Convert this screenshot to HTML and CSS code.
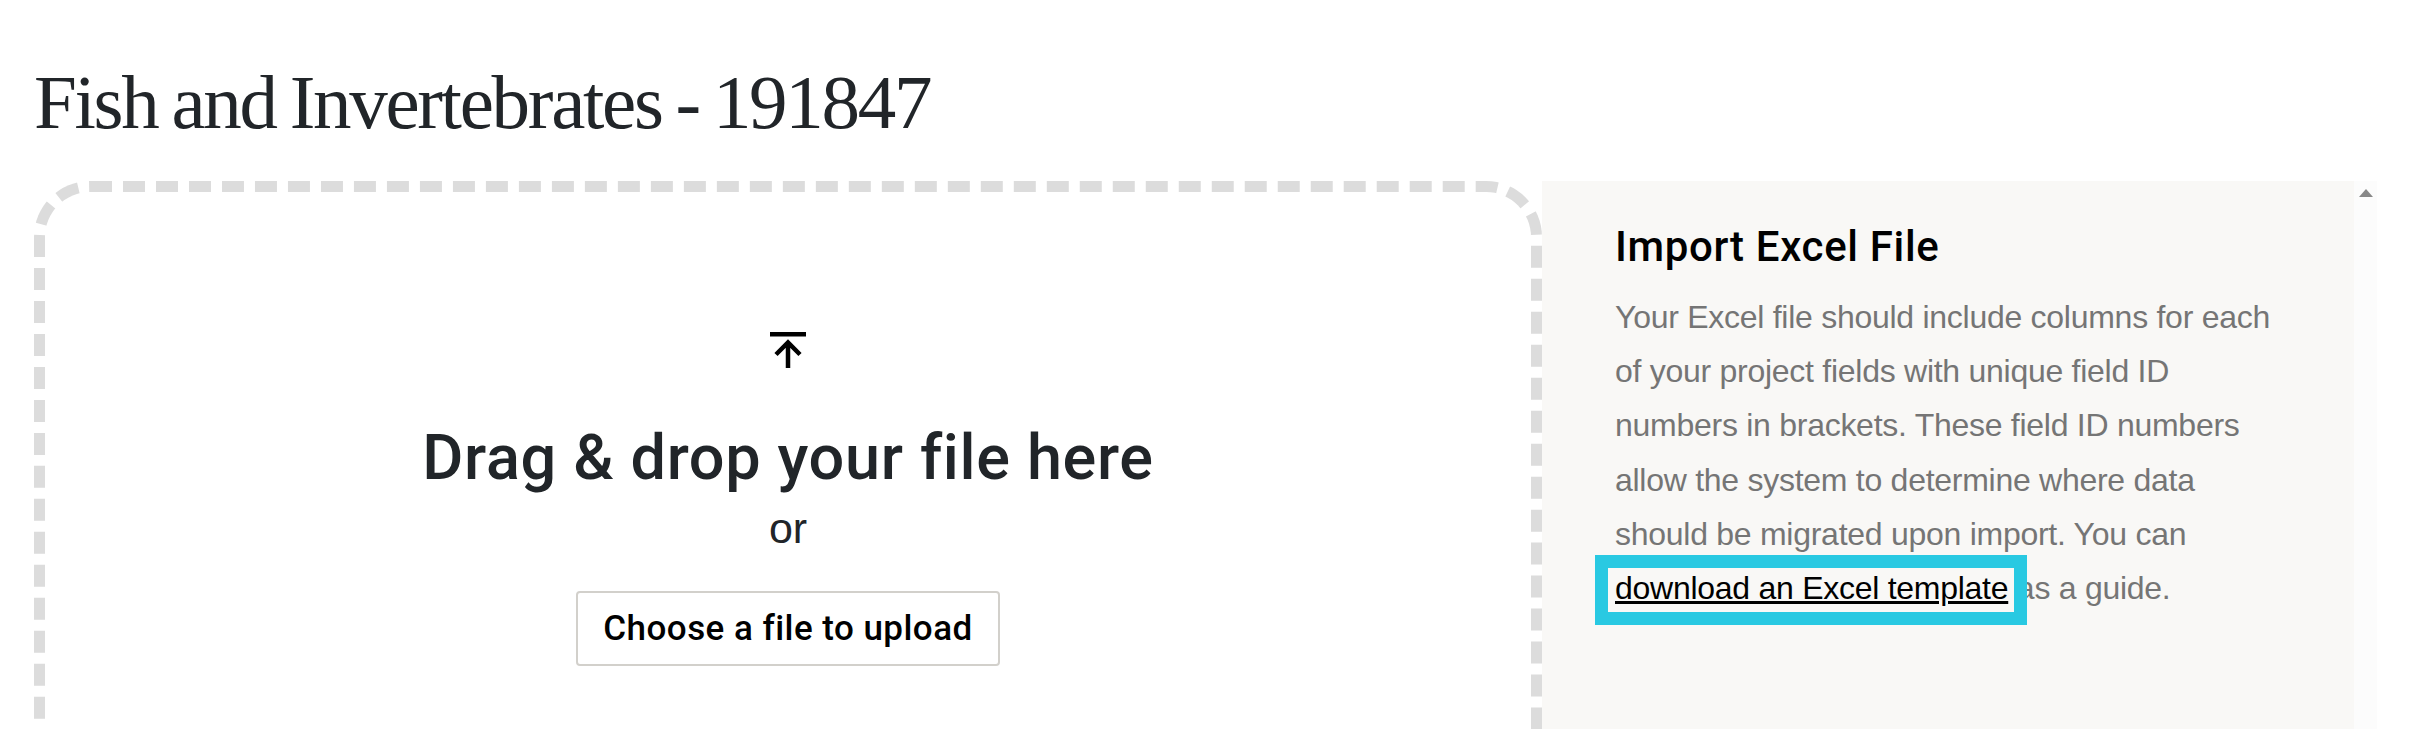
FILE: index.html
```html
<!DOCTYPE html>
<html lang="en">
<head>
    <meta charset="UTF-8">
    <meta name="viewport" content="width=device-width, initial-scale=1.0">
    <title>Fish and Invertebrates - 191847</title>
    <link rel="stylesheet" href="styles.css">
</head>
<body>
    <h1 class="page-title">Fish and Invertebrates - 191847</h1>
    <div class="import-row">
        <div class="dropzone">
            <svg class="upload-icon" width="36" height="37" viewBox="0 0 36 37">
                <path d="M0 2.2H36" fill="none" stroke="#000" stroke-width="4.5"/>
                <path d="M18 36V10M6 22.5L18 10.5L30 22.5" fill="none" stroke="#000" stroke-width="4.5"/>
            </svg>
            <h2 class="drop-title">Drag &amp; drop your file here</h2>
            <div class="drop-or">or</div>
            <button class="choose-btn" type="button">Choose a file to upload</button>
        </div>
        <div class="help-panel">
            <h3 class="help-title">Import Excel File</h3>
            <p class="help-text">
                Your Excel file should include columns for each<br>
                of your project fields with unique field ID<br>
                numbers in brackets. These field ID numbers<br>
                allow the system to determine where data<br>
                should be migrated upon import. You can<br>
                <a class="template-link" href="#">download an Excel template</a> as a guide.
            </p>
        </div>
        <div class="panel-scroll"><span class="scroll-up"></span></div>
    </div>
</body>
</html>
```

FILE: styles.css
```css
html, body {
    height: 100%;
}
body {
    margin: 0;
    overflow: hidden;
    background-color: #fff;
    font-family: "Liberation Sans", Arial, sans-serif;
}
.page-title {
    margin: 0;
    padding: 58px 0 0 34px;
    height: 181px;
    box-sizing: border-box;
    font-family: "Liberation Serif", serif;
    font-size: 77px;
    line-height: 88px;
    font-weight: 400;
    letter-spacing: -2.3px;
    word-spacing: -3px;
    color: #212529;
}
.import-row {
    display: flex;
    padding: 0 32px 0 34px;
    height: 548px;
    box-sizing: border-box;
    overflow: hidden;
}
.dropzone {
    width: 1508px;
    height: 800px;
    box-sizing: border-box;
    border: 11px dashed #dcdcdc;
    border-radius: 56px;
    padding-top: 140px;
    display: flex;
    flex-direction: column;
    align-items: center;
}
.upload-icon {
    display: block;
}
.drop-title {
    margin: 52px 0 0;
    font-family: Roboto, sans-serif;
    font-size: 63px;
    line-height: 74px;
    font-weight: 500;
    letter-spacing: 0.65px;
    color: #212529;
}
.drop-or {
    margin-top: 8px;
    font-size: 43px;
    line-height: 50px;
    color: #212529;
}
.choose-btn {
    margin-top: 38px;
    width: 424px;
    height: 75px;
    box-sizing: border-box;
    border: 2px solid #d2d0cb;
    border-radius: 4px;
    background-color: #fff;
    font-family: Roboto, sans-serif;
    font-size: 35px;
    font-weight: 500;
    letter-spacing: 0.45px;
    color: #000;
}
.help-panel {
    width: 812px;
    padding: 42px 0 0 73px;
    box-sizing: border-box;
    background-color: #f9f8f6;
}
.help-title {
    margin: 0;
    font-family: Roboto, sans-serif;
    font-size: 42px;
    line-height: 48px;
    font-weight: 500;
    letter-spacing: 0.66px;
    color: #000;
}
.help-text {
    margin: 19px 0 0;
    font-size: 32px;
    line-height: 54.2px;
    letter-spacing: -0.27px;
    color: #757575;
}
.template-link {
    position: relative;
    color: #000;
    text-decoration: underline;
    text-decoration-thickness: 3px;
}
.template-link::after {
    content: "";
    position: absolute;
    left: -20px;
    right: -19px;
    top: -15px;
    bottom: -19px;
    border: 13px solid #29c9e2;
}
.panel-scroll {
    width: 23px;
    background-color: #fcfcfc;
    display: flex;
    justify-content: center;
    padding-top: 8px;
    box-sizing: border-box;
}
.scroll-up {
    width: 0;
    height: 0;
    border-left: 7.5px solid transparent;
    border-right: 7.5px solid transparent;
    border-bottom: 8px solid #888;
}
```
